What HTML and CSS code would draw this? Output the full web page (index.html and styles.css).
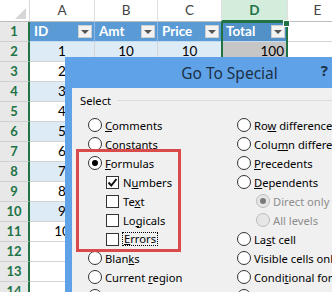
FILE: index.html
```html
<!DOCTYPE html>
<html>
<head>
<meta charset="utf-8">
<link rel="stylesheet" href="styles.css">
</head>
<body>
<div class="sheet">
  <div class="c corner"><span class="tri"></span></div>
  <div class="c ch">A</div><div class="c ch">B</div><div class="c ch">C</div><div class="c ch sel">D</div><div class="c ch">E</div>

  <div class="c rh">1</div>
  <div class="c th"><span>ID</span><span class="dd"><i></i></span></div>
  <div class="c th"><span>Amt</span><span class="dd"><i></i></span></div>
  <div class="c th"><span>Price</span><span class="dd"><i></i></span></div>
  <div class="c th tsel"><span>Total</span><span class="dd"><i></i></span></div>
  <div class="c"></div>

  <div class="c rh">2</div><div class="c band ctr">1</div><div class="c band ctr">10</div><div class="c band ctr">10</div><div class="c dsel rt">100</div><div class="c"></div>
  <div class="c rh">3</div><div class="c ctr">2</div><div class="c ctr">10</div><div class="c ctr">10</div><div class="c dsel rt">100</div><div class="c"></div>
  <div class="c rh">4</div><div class="c band ctr">3</div><div class="c band ctr">10</div><div class="c band ctr">10</div><div class="c dsel rt">100</div><div class="c"></div>
  <div class="c rh">5</div><div class="c ctr">4</div><div class="c ctr">10</div><div class="c ctr">10</div><div class="c dsel rt">100</div><div class="c"></div>
  <div class="c rh">6</div><div class="c band ctr">5</div><div class="c band ctr">10</div><div class="c band ctr">10</div><div class="c dsel rt">100</div><div class="c"></div>
  <div class="c rh">7</div><div class="c ctr">6</div><div class="c ctr">10</div><div class="c ctr">10</div><div class="c dsel rt">100</div><div class="c"></div>
  <div class="c rh">8</div><div class="c band ctr">7</div><div class="c band ctr">10</div><div class="c band ctr">10</div><div class="c dsel rt">100</div><div class="c"></div>
  <div class="c rh">9</div><div class="c ctr">8</div><div class="c ctr">10</div><div class="c ctr">10</div><div class="c dsel rt">100</div><div class="c"></div>
  <div class="c rh">10</div><div class="c band ctr">9</div><div class="c band ctr">10</div><div class="c band ctr">10</div><div class="c dsel rt">100</div><div class="c"></div>
  <div class="c rh">11</div><div class="c ctr">10</div><div class="c ctr">10</div><div class="c ctr">10</div><div class="c dsel rt">100</div><div class="c"></div>
  <div class="c rh">12</div><div class="c"></div><div class="c"></div><div class="c"></div><div class="c dsel"></div><div class="c"></div>
  <div class="c rh">13</div><div class="c"></div><div class="c"></div><div class="c"></div><div class="c dsel"></div><div class="c"></div>
  <div class="c rh">14</div><div class="c"></div><div class="c"></div><div class="c"></div><div class="c dsel"></div><div class="c"></div>
</div>

<div class="colsel"><span class="handle"></span></div>

<div class="dlg">
  <div class="title"><span></span><span class="ttext">Go To Special</span><span class="help">?</span></div>
  <div class="body">
    <div class="legend"><span>Select</span><span class="rule"></span></div>
    <div class="opts">
      <div class="col">
        <div class="opt"><span class="radio"></span><span><u>C</u>omments</span></div>
        <div class="opt"><span class="radio"></span><span>C<u>o</u>nstants</span></div>
        <div class="opt"><span class="radio on"></span><span><u>F</u>ormulas</span></div>
        <div class="opt sub"><span class="cb"><svg width="11" height="11" viewBox="0 0 11 11"><polyline points="1.5,5.5 4.3,8.5 9.5,2" fill="none" stroke="#111" stroke-width="2"/></svg></span><span>N<u>u</u>mbers</span></div>
        <div class="opt sub"><span class="cb"></span><span>Te<u>x</u>t</span></div>
        <div class="opt sub"><span class="cb"></span><span>Lo<u>g</u>icals</span></div>
        <div class="opt sub"><span class="cb"></span><span class="focus"><u>E</u>rrors</span></div>
        <div class="opt"><span class="radio"></span><span>Blan<u>k</u>s</span></div>
        <div class="opt"><span class="radio"></span><span>Current <u>r</u>egion</span></div>
        <div class="opt"><span class="radio"></span><span>Current <u>a</u>rray</span></div>
      </div>
      <div class="col">
        <div class="opt"><span class="radio"></span><span>Ro<u>w</u> differences</span></div>
        <div class="opt"><span class="radio"></span><span>Colu<u>m</u>n differences</span></div>
        <div class="opt"><span class="radio"></span><span><u>P</u>recedents</span></div>
        <div class="opt"><span class="radio"></span><span><u>D</u>ependents</span></div>
        <div class="opt sub2 dis"><span class="radio on"></span><span>Direct only</span></div>
        <div class="opt sub2 dis"><span class="radio"></span><span>All levels</span></div>
        <div class="opt"><span class="radio"></span><span>La<u>s</u>t cell</span></div>
        <div class="opt"><span class="radio"></span><span>Visible cells onl<u>y</u></span></div>
        <div class="opt"><span class="radio"></span><span>Condi<u>t</u>ional formats</span></div>
        <div class="opt"><span class="radio"></span><span>Data <u>v</u>alidation</span></div>
      </div>
    </div>
    <div class="hilite"></div>
  </div>
</div>
</body>
</html>
```

FILE: styles.css
```css
html, body {
  margin: 0;
  padding: 0;
}
body {
  width: 332px;
  height: 292px;
  overflow: hidden;
  position: relative;
  background: #ffffff;
  font-family: "Lato", "Liberation Sans", sans-serif;
}

.sheet {
  display: grid;
  grid-template-columns: 30px 65px 63px 64px 66px 60px;
  grid-template-rows: 22px repeat(14, 20px);
}

.c {
  box-sizing: border-box;
  border-right: 1px solid #d4d4d4;
  border-bottom: 1px solid #d4d4d4;
  font-size: 13.5px;
  line-height: 19px;
  color: #000;
  overflow: hidden;
  white-space: nowrap;
}

.corner {
  background: #ffffff;
  border-right: 1px solid #d8d8d8;
  border-bottom: 1px solid #bdbdbd;
  display: flex;
  align-items: flex-end;
  justify-content: flex-end;
  padding: 0 3px 2px 0;
}
.tri {
  width: 0;
  height: 0;
  border-left: 11px solid transparent;
  border-bottom: 11px solid #d6d6d6;
}

.ch {
  background: #ffffff;
  color: #444;
  text-align: center;
  line-height: 21px;
  font-size: 13.5px;
  border-right: 1px solid #e0e0e0;
  border-bottom: 1px solid #bdbdbd;
}
.ch.sel {
  background: #d3ecdc;
  color: #217346;
  font-weight: bold;
  border-bottom: 2px solid #217346;
  line-height: 20px;
}

.rh {
  background: #e8e8e8;
  color: #217346;
  font-weight: bold;
  text-align: center;
  font-size: 13px;
  border-right: 2px solid #217346;
  border-bottom: 1px solid #d0d0d0;
}

.th {
  background: #5b9bd5;
  color: #ffffff;
  font-weight: bold;
  display: flex;
  align-items: center;
  justify-content: space-between;
  padding: 0 2px 0 4px;
  border-right: 1px solid #8db8e2;
  border-bottom: 1px solid #c7dbef;
}
.th.tsel {
  background: #5290c8;
}
.dd {
  width: 14px;
  height: 13px;
  box-sizing: border-box;
  background: #f3f3f3;
  border: 1px solid #cfcfcf;
  display: flex;
  align-items: center;
  justify-content: center;
}
.dd i {
  width: 0;
  height: 0;
  border-left: 4px solid transparent;
  border-right: 4px solid transparent;
  border-top: 4px solid #555;
}

.band {
  background: #ddebf7;
}
.ctr {
  text-align: center;
}
.rt {
  text-align: right;
  padding-right: 3px;
}
.dsel {
  background: #c6c6c6;
}

.colsel {
  position: absolute;
  left: 221px;
  top: 21px;
  width: 67px;
  height: 300px;
  box-sizing: border-box;
  border: 2px solid #217346;
}
.handle {
  position: absolute;
  right: -4px;
  top: -3px;
  width: 5px;
  height: 5px;
  background: #217346;
  border: 1px solid #fff;
}

.dlg {
  position: absolute;
  left: 65px;
  top: 57px;
  width: 327px;
  height: 262px;
  background: #60a2e8;
  display: flex;
  flex-direction: column;
  font-family: "Noto Sans", "Open Sans", sans-serif;
}
.title {
  height: 31px;
  flex: none;
  display: grid;
  grid-template-columns: 1fr auto 1fr;
  align-items: center;
  color: #1b3147;
}
.ttext {
  font-size: 15.5px;
  padding-left: 2px;
}
.help {
  justify-self: end;
  margin-right: 64px;
  font-size: 15px;
  font-weight: bold;
  margin-top: -6px;
}
.body {
  flex: 1;
  margin: 0 7px;
  background: #f0f0f0;
  position: relative;
  padding: 4px 0 0 8px;
  font-size: 11.2px;
  color: #000;
}
.legend {
  display: flex;
  align-items: center;
  height: 16px;
}
.rule {
  flex: 1;
  height: 1px;
  background: #dcdcdc;
  margin-left: 6px;
}
.opts {
  display: grid;
  grid-template-columns: 149px auto;
  margin: 7.5px 0 0 8px;
}
.col {
  display: flex;
  flex-direction: column;
}
.opt {
  height: 19px;
  display: flex;
  align-items: center;
  gap: 3px;
  white-space: nowrap;
}
.opt.sub {
  padding-left: 18px;
  gap: 4px;
}
.opt.sub2 {
  padding-left: 19px;
}
.radio {
  width: 14px;
  height: 14px;
  flex: none;
  box-sizing: border-box;
  border: 1px solid #333;
  border-radius: 50%;
  background: #fff;
  display: flex;
  align-items: center;
  justify-content: center;
}
.radio.on::after {
  content: "";
  width: 6px;
  height: 6px;
  border-radius: 50%;
  background: #000;
}
.dis {
  color: #8d8d8d;
}
.dis .radio {
  border-color: #bcbcbc;
  background: #e6e6e6;
}
.dis .radio.on::after {
  background: #7a7a7a;
}
.cb {
  width: 13px;
  height: 13px;
  flex: none;
  box-sizing: border-box;
  border: 1px solid #333;
  background: #fff;
  display: flex;
  align-items: center;
  justify-content: center;
}
.focus {
  outline: 1px dotted #000;
  padding: 0 1px;
  line-height: 12px;
}
.hilite {
  position: absolute;
  left: 4px;
  top: 61px;
  width: 105px;
  height: 103px;
  box-sizing: border-box;
  border: 3px solid #d94b4b;
}
```
